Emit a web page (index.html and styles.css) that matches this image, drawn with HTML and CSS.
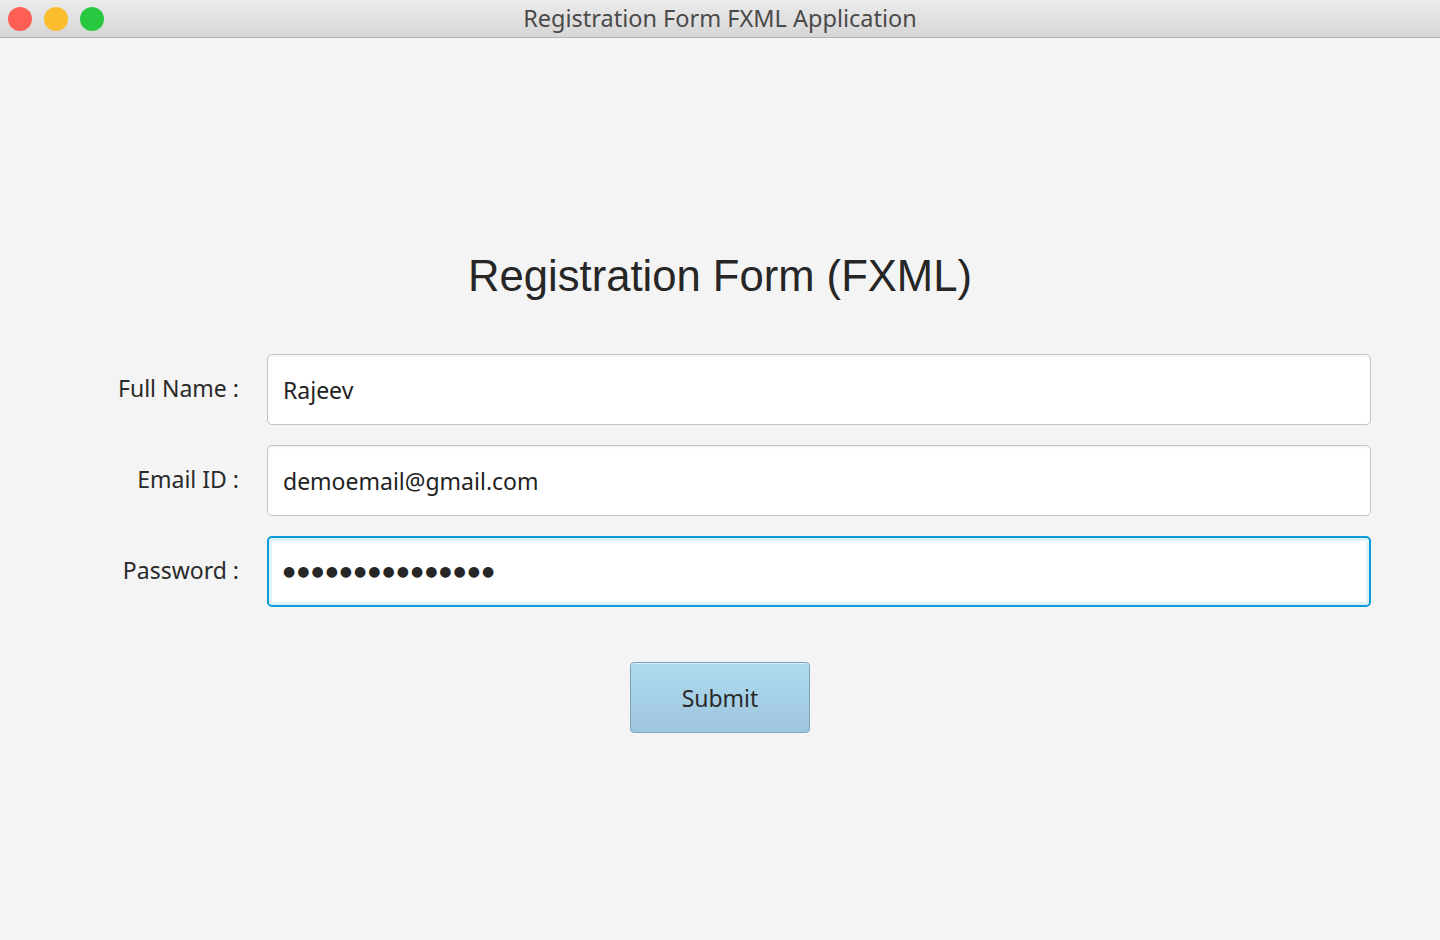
FILE: index.html
```html
<!DOCTYPE html>
<html lang="en">
<head>
<meta charset="utf-8">
<title>Registration Form FXML Application</title>
<link rel="stylesheet" href="styles.css">
</head>
<body>
<div class="window">
  <header class="titlebar">
    <div class="lights">
      <span class="light red"></span>
      <span class="light yellow"></span>
      <span class="light green"></span>
    </div>
    <div class="wintitle">Registration Form FXML Application</div>
  </header>
  <main class="content">
    <h1 class="heading">Registration Form (FXML)</h1>
    <form class="form">
      <label class="label" for="name">Full Name :</label>
      <div class="field"><span class="value">Rajeev</span></div>
      <label class="label" for="email">Email ID :</label>
      <div class="field"><span class="value">demoemail@gmail.com</span></div>
      <label class="label" for="pw">Password :</label>
      <div class="field focused"><span class="value dots">●●●●●●●●●●●●●●●</span></div>
    </form>
    <div class="actions">
      <button class="submit" type="button">Submit</button>
    </div>
  </main>
</div>
</body>
</html>
```
FILE: styles.css
```css
* { box-sizing: border-box; }
html, body { margin: 0; padding: 0; }
body {
  width: 1440px;
  height: 940px;
  background: #f4f4f4;
  font-family: "Noto Sans", "Open Sans", sans-serif;
  color: #2a2a2a;
  overflow: hidden;
}
.window { display: flex; flex-direction: column; height: 940px; }
.titlebar {
  height: 38px;
  background: linear-gradient(#ebebeb, #d6d6d6);
  border-bottom: 1px solid #b4b4b4;
  display: flex;
  align-items: center;
  position: relative;
}
.lights { display: flex; gap: 12px; padding-left: 8px; }
.light { width: 24px; height: 24px; border-radius: 50%; display: block; }
.red { background: #fd5f57; }
.yellow { background: #fbbd2e; }
.green { background: #28c840; }
.wintitle {
  position: absolute;
  left: 0; right: 0; top: 0;
  line-height: 37px;
  text-align: center;
  font-size: 23.5px;
  color: #4a4a4a;
}
.content { display: flex; flex-direction: column; align-items: center; }
.heading {
  margin: 210px 0 0;
  font-family: "Liberation Sans", Arial, sans-serif;
  font-weight: normal;
  font-size: 43.6px;
  line-height: 56px;
  color: #262626;
}
.form {
  margin-top: 50px;
  width: 1440px;
  display: grid;
  grid-template-columns: 267px 1104px;
  row-gap: 20px;
  align-items: center;
}
.label {
  font-size: 23px;
  text-align: right;
  padding-right: 28px;
  padding-bottom: 3px;
  color: #2a2a2a;
}
.field {
  height: 71px;
  background: #fff;
  border: 1px solid #c3c3c3;
  border-radius: 5px;
  display: flex;
  align-items: center;
  padding-left: 15px;
  box-shadow: inset 0 2px 2px rgba(0,0,0,0.04);
}
.field.focused {
  border: 2px solid #0a9bd8;
  box-shadow: inset 0 0 0 3px #e0f1fa;
  padding-left: 14px;
  padding-bottom: 2px;
}
.value { font-size: 23px; color: #232323; }
.dots {
  font-family: "DejaVu Sans", sans-serif;
  font-size: 14px;
  letter-spacing: 2px;
  line-height: 1;
  color: #262626;
}
.actions { margin-top: 55px; }
.submit {
  width: 180px;
  height: 71px;
  border: 1px solid #7fa3bf;
  border-radius: 4px;
  background: linear-gradient(#aedaee, #9ec6dd);
  font-family: "Noto Sans", "Open Sans", sans-serif;
  font-size: 23px;
  color: #2a2a2a;
  box-shadow: inset 0 1px 0 rgba(255,255,255,0.5);
}
```
